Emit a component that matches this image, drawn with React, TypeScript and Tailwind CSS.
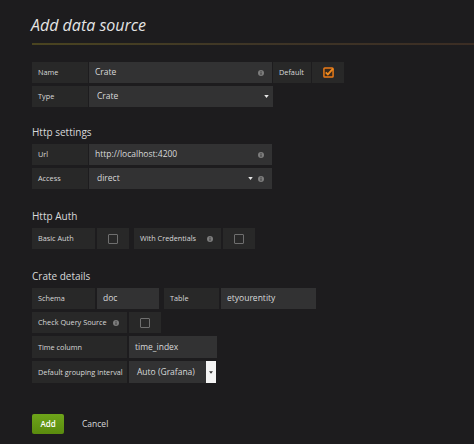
import React from "react"

const labelCls = "flex items-center h-full bg-[#282828] text-[#d8d9da] text-[7.3px] pl-[6px] shrink-0 whitespace-nowrap"
const inputCls = "flex items-center h-full bg-[#323233] text-[#d8d9da] text-[8.5px] pl-[6px] shrink-0 relative"

function Info({ className = "" }: { className?: string }) {
  return (
    <svg viewBox="0 0 10 10" className={"w-[6px] h-[6px] " + className}>
      <circle cx="5" cy="5" r="5" fill="#7d7d7d" />
      <rect x="4.2" y="4.2" width="1.6" height="3.8" fill="#323233" />
      <rect x="4.2" y="2" width="1.6" height="1.5" fill="#323233" />
    </svg>
  )
}

function Caret() {
  return (
    <svg viewBox="0 0 6 4" className="w-[5px] h-[3px]">
      <path d="M0 0h6L3 4z" fill="#e6e6e6" />
    </svg>
  )
}

function Check({ checked = false }: { checked?: boolean }) {
  if (checked) {
    return (
      <svg viewBox="0 0 12 12" className="w-[11px] h-[11px]">
        <rect x="1" y="1" width="10" height="10" rx="1" fill="#3a2a1c" stroke="#eb7b18" strokeWidth="1.6" />
        <path d="M3 5.8l2.3 2.3L11 1.8" fill="none" stroke="#f08a1e" strokeWidth="2" />
      </svg>
    )
  }
  return <div className="w-[10px] h-[10px] border border-[#6f6f6f] rounded-[1px]" />
}

function CheckCell({ checked = false, w }: { checked?: boolean; w: string }) {
  return (
    <div className={"flex items-center justify-center h-full bg-[#282828] shrink-0 " + w}>
      <Check checked={checked} />
    </div>
  )
}

function Heading({ children, mt }: { children: React.ReactNode; mt: string }) {
  return (
    <div className={"h-[14px] leading-[14px] text-[10px] text-[#d8d9da] mb-[5px] " + mt}>{children}</div>
  )
}

export default function App() {
  return (
    <div className="w-[474px] h-[444px] overflow-hidden bg-[#1d1c1e] font-['Open_Sans',sans-serif]">
      <div className="pt-[14px] pl-[31px] h-[35px] leading-[22px] text-[16px] italic text-[#e4e4e4]">
        Add data source
      </div>
      <div className="ml-[32px] mt-[8px] h-[2px] bg-gradient-to-r from-[#4a4420] via-[#3e3526] to-[#3b2d24]" />

      <div className="pl-[32px]">
        <div className="mt-[17px] flex flex-col gap-[3px]">
          <div className="flex h-[21px] gap-[1px]">
            <div className={labelCls + " w-[56px]"}>Name</div>
            <div className={inputCls + " w-[183px]"}>
              Crate
              <Info className="absolute right-[8px] top-[8px]" />
            </div>
            <div className={labelCls + " w-[38px]"}>Default</div>
            <CheckCell checked w="w-[32px]" />
          </div>
          <div className="flex h-[21px] gap-[1px]">
            <div className={labelCls + " w-[56px]"}>Type</div>
            <div className={inputCls + " w-[184px] pl-[8px]"}>
              Crate
              <span className="absolute right-[4px] top-[9px] flex">
                <Caret />
              </span>
            </div>
          </div>
        </div>

        <Heading mt="mt-[18px]">Http settings</Heading>
        <div className="flex flex-col gap-[3px]">
          <div className="flex h-[21px] gap-[1px]">
            <div className={labelCls + " w-[56px]"}>Url</div>
            <div className={inputCls + " w-[183px]"}>
              http://localhost:4200
              <Info className="absolute right-[8px] top-[8px]" />
            </div>
          </div>
          <div className="flex h-[21px] gap-[1px]">
            <div className={labelCls + " w-[56px]"}>Access</div>
            <div className={inputCls + " w-[183px] pl-[8px]"}>
              direct
              <span className="absolute right-[19px] top-[9px] flex">
                <Caret />
              </span>
              <Info className="absolute right-[8px] top-[8px]" />
            </div>
          </div>
        </div>

        <Heading mt="mt-[20px]">Http Auth</Heading>
        <div className="flex h-[21px] gap-[2px]">
          <div className={labelCls + " w-[63px]"}>Basic Auth</div>
          <CheckCell w="w-[32px]" />
          <div className="w-[1px]" />
          <div className={labelCls + " w-[87px] relative"}>
            With Credentials
            <Info className="absolute right-[8px] top-[8px]" />
          </div>
          <CheckCell w="w-[32px]" />
        </div>

        <Heading mt="mt-[20px]">Crate details</Heading>
        <div className="flex flex-col gap-[3px]">
          <div className="flex h-[21px] gap-[2px]">
            <div className={labelCls + " w-[63px]"}>Schema</div>
            <div className={inputCls + " w-[62px]"}>doc</div>
            <div className="w-[1px]" />
            <div className={labelCls + " w-[55px]"}>Table</div>
            <div className={inputCls + " w-[95px]"}>etyourentity</div>
          </div>
          <div className="flex h-[21px] gap-[2px]">
            <div className={labelCls + " w-[95px] relative"}>
              Check Query Source
              <Info className="absolute right-[8px] top-[8px]" />
            </div>
            <CheckCell w="w-[32px]" />
          </div>
          <div className="flex h-[22px] gap-[2px]">
            <div className={labelCls + " w-[95px]"}>Time column</div>
            <div className={inputCls + " w-[88px]"}>time_index</div>
          </div>
          <div className="flex h-[22px] gap-[2px]">
            <div className={labelCls + " w-[95px]"}>Default grouping interval</div>
            <div className="flex h-full">
              <div className={inputCls + " w-[77px] pl-[8px]"}>Auto (Grafana)</div>
              <div className="w-[10px] h-full bg-[#f4f4f4] flex items-center justify-center">
                <svg viewBox="0 0 6 4" className="w-[4px] h-[3px]">
                  <path d="M0 0h6L3 4z" fill="#333" />
                </svg>
              </div>
            </div>
          </div>
        </div>

        <div className="mt-[31px] flex items-center">
          <button className="w-[32px] h-[20px] rounded-[2px] bg-gradient-to-b from-[#6ea41a] to-[#5a8b0e] text-white text-[8px] font-semibold">
            Add
          </button>
          <span className="ml-[18px] text-[8.5px] text-[#d8d9da]">Cancel</span>
        </div>
      </div>
    </div>
  )
}
